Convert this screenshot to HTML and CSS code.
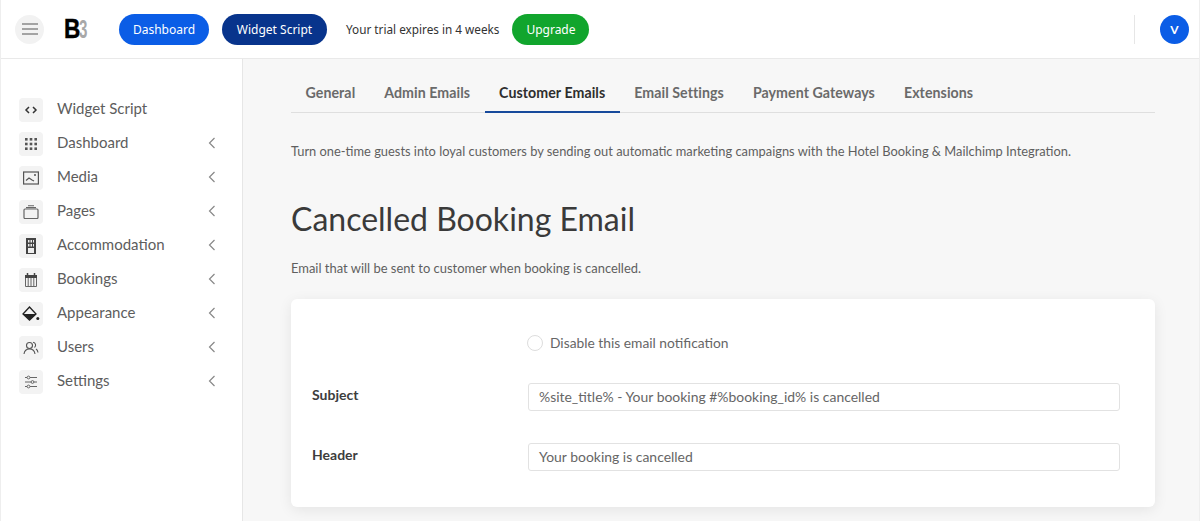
FILE: index.html
```html
<!DOCTYPE html>
<html lang="en">
<head>
<meta charset="utf-8">
<title>Cancelled Booking Email</title>
<link rel="stylesheet" href="styles.css">
</head>
<body>
<header class="topbar">
  <button class="burger" aria-label="Menu">
    <svg width="16" height="12" viewBox="0 0 16 12"><path d="M0 1h16M0 6h16M0 11h16" stroke="#555" stroke-width="1.2"/></svg>
  </button>
  <div class="logo"><span class="logo-b">B</span><span class="logo-3">3</span></div>
  <a class="pill pill-blue">Dashboard</a>
  <a class="pill pill-navy">Widget Script</a>
  <span class="trial">Your trial expires in 4 weeks</span>
  <a class="pill pill-green">Upgrade</a>
  <span class="spacer"></span>
  <span class="divider"></span>
  <span class="avatar">V</span>
</header>
<div class="body">
  <nav class="sidebar">
    <a class="item"><span class="ico"><svg width="14" height="14" viewBox="0 0 14 14"><path d="M5 4 2 7l3 3M9 4l3 3-3 3" fill="none" stroke="#333" stroke-width="1.5"/></svg></span><span class="label">Widget Script</span></a>
    <a class="item"><span class="ico"><svg width="14" height="14" viewBox="0 0 14 14" fill="#555"><rect x="1" y="1" width="2.6" height="2.6"/><rect x="5.700" y="1" width="2.6" height="2.6"/><rect x="10.400" y="1" width="2.6" height="2.6"/><rect x="1" y="5.700" width="2.6" height="2.6"/><rect x="5.700" y="5.700" width="2.6" height="2.6"/><rect x="10.400" y="5.700" width="2.6" height="2.6"/><rect x="1" y="10.400" width="2.6" height="2.6"/><rect x="5.700" y="10.400" width="2.6" height="2.6"/><rect x="10.400" y="10.400" width="2.6" height="2.6"/></svg></span><span class="label">Dashboard</span><svg class="chev" width="8" height="12" viewBox="0 0 8 12"><path d="M6.5 1 1.5 6l5 5" fill="none" stroke="#888" stroke-width="1.2"/></svg></a>
    <a class="item"><span class="ico"><svg width="16" height="14" viewBox="0 0 16 14"><rect x=".6" y="1" width="14.8" height="12" fill="none" stroke="#555" stroke-width="1.2"/><path d="M3 9.500 6 7l3 2 2 1" fill="none" stroke="#555" stroke-width="1.2"/><circle cx="12" cy="4" r="1" fill="#555"/></svg></span><span class="label">Media</span><svg class="chev" width="8" height="12" viewBox="0 0 8 12"><path d="M6.5 1 1.5 6l5 5" fill="none" stroke="#888" stroke-width="1.2"/></svg></a>
    <a class="item"><span class="ico"><svg width="16" height="14" viewBox="0 0 16 14"><rect x="1" y="4" width="14" height="9.500" rx="1" fill="none" stroke="#666" stroke-width="1.2"/><path d="M3 2.600h10M5 .8h6" stroke="#666" stroke-width="1.100"/></svg></span><span class="label">Pages</span><svg class="chev" width="8" height="12" viewBox="0 0 8 12"><path d="M6.5 1 1.5 6l5 5" fill="none" stroke="#888" stroke-width="1.2"/></svg></a>
    <a class="item"><span class="ico"><svg width="12" height="16" viewBox="0 0 12 16"><rect x="1" y="0" width="10" height="16" fill="#444"/><path d="M3 2h1.500v2.500H3zM5.500 2H7v2.500H5.500zM8 2h1v2.500H8zM3 6h1.500v2.500H3zM5.500 6H7v2.500H5.500zM8 6h1v2.500H8zM3 10h6v5H3z" fill="#eee"/></svg></span><span class="label">Accommodation</span><svg class="chev" width="8" height="12" viewBox="0 0 8 12"><path d="M6.500 1 1.500 6l5 5" fill="none" stroke="#888" stroke-width="1.2"/></svg></a>
    <a class="item"><span class="ico"><svg width="14" height="14" viewBox="0 0 14 14"><path d="M3.500 0v3M10.500 0v3" stroke="#444" stroke-width="1.500"/><rect x="1" y="2" width="12" height="3" fill="#444"/><path d="M1.500 5v8.500h11V5M4.200 5v8.500M7 5v8.500M9.800 5v8.500" fill="none" stroke="#666"/></svg></span><span class="label">Bookings</span><svg class="chev" width="8" height="12" viewBox="0 0 8 12"><path d="M6.500 1 1.500 6l5 5" fill="none" stroke="#888" stroke-width="1.2"/></svg></a>
    <a class="item"><span class="ico"><svg width="18" height="16" viewBox="0 0 18 16"><path d="M7.500 1 1 8l6.500 6L14 8z" fill="none" stroke="#222" stroke-width="1.300"/><path d="M1 8h13l-6.500 6z" fill="#222"/><circle cx="15.800" cy="12.500" r="1.500" fill="#222"/></svg></span><span class="label">Appearance</span><svg class="chev" width="8" height="12" viewBox="0 0 8 12"><path d="M6.500 1 1.500 6l5 5" fill="none" stroke="#888" stroke-width="1.2"/></svg></a>
    <a class="item"><span class="ico"><svg width="16" height="14" viewBox="0 0 16 14"><circle cx="6.500" cy="4.500" r="3" fill="none" stroke="#555" stroke-width="1.100"/><path d="M1 13c.5-3.500 2.500-5 5.500-5s5 1.500 5.500 5M10 1.200a3 3 0 0 1 1.500 5.300M13 8c1.200.8 1.800 2 2 3.500" fill="none" stroke="#555" stroke-width="1.100"/></svg></span><span class="label">Users</span><svg class="chev" width="8" height="12" viewBox="0 0 8 12"><path d="M6.500 1 1.500 6l5 5" fill="none" stroke="#888" stroke-width="1.2"/></svg></a>
    <a class="item"><span class="ico"><svg width="14" height="14" viewBox="0 0 14 14"><path d="M1 2.500h2M6 2.500h7M1 7h6M10 7h3M1 11.500h2M6 11.500h7" stroke="#666"/><circle cx="4.500" cy="2.500" r="1.400" fill="none" stroke="#666"/><circle cx="8.500" cy="7" r="1.400" fill="none" stroke="#666"/><circle cx="4.500" cy="11.500" r="1.400" fill="none" stroke="#666"/></svg></span><span class="label">Settings</span><svg class="chev" width="8" height="12" viewBox="0 0 8 12"><path d="M6.5 1 1.5 6l5 5" fill="none" stroke="#888" stroke-width="1.2"/></svg></a>
  </nav>
  <main class="main">
    <div class="tabs">
      <a class="tab">General</a>
      <a class="tab">Admin Emails</a>
      <a class="tab active">Customer Emails</a>
      <a class="tab">Email Settings</a>
      <a class="tab">Payment Gateways</a>
      <a class="tab">Extensions</a>
    </div>
    <p class="intro">Turn one-time guests into loyal customers by sending out automatic marketing campaigns with the Hotel Booking &amp; Mailchimp Integration.</p>
    <h1 class="title">Cancelled Booking Email</h1>
    <p class="sub">Email that will be sent to customer when booking is cancelled.</p>
    <section class="card">
      <div class="row row-check"><span class="field-label"></span><label class="check"><span class="radio"></span><span class="check-text">Disable this email notification</span></label></div>
      <div class="row row-subject"><span class="field-label">Subject</span><div class="input">%site_title% - Your booking #%booking_id% is cancelled</div></div>
      <div class="row"><span class="field-label">Header</span><div class="input">Your booking is cancelled</div></div>
    </section>
  </main>
</div>
</body>
</html>
```
FILE: styles.css
```css
* { box-sizing: border-box; }
html, body { margin: 0; height: 100%; overflow: hidden; }
body { font-family: Lato, "Open Sans", sans-serif; background: #fff; color: #555; width: 1200px; height: 521px; border-left: 1px solid #eee; border-right: 1px solid #eee; }
.topbar { height: 59px; display: flex; align-items: center; border-bottom: 1px solid #e9e9e9; padding: 0 10px 0 14px; background: #fff; }
.burger { width: 29px; height: 29px; border: 0; border-radius: 50%; background: #f2f2f2; display: flex; align-items: center; justify-content: center; padding: 0; }
.logo { margin-left: 20px; width: 55px; display: flex; align-items: center; font-family: "Liberation Sans", sans-serif; font-weight: 700; line-height: 1; color: #000; }
.logo-b { width: 15px; font-size: 27px; transform: scaleX(.84); transform-origin: left center; -webkit-text-stroke: .5px #000; }
.logo-3 { width: 8px; font-size: 26px; color: #a8a8a8; transform: scaleX(.58); transform-origin: left center; }
.pill { height: 31px; display: inline-flex; align-items: center; justify-content: center; border-radius: 16px; color: #fff; font-size: 12px; font-family: "Noto Sans", sans-serif; }
.pill-blue { width: 90px; background: #0b5de6; }
.pill-navy { width: 105px; margin-left: 13px; background: #08348c; }
.pill-green { width: 77px; background: #11a52d; }
.trial { margin: 0 13px 0 19px; font-size: 11.750px; color: #333; font-family: "Noto Sans", sans-serif; white-space: nowrap; }
.spacer { flex: 1; }
.divider { width: 1px; height: 29px; background: #e6e6e6; margin-right: 25px; }
.avatar { width: 29px; height: 29px; border-radius: 50%; background: #0b5de6; color: #fff; font-size: 12px; font-weight: 700; display: flex; align-items: center; justify-content: center; }
.body { display: flex; height: 462px; }
.sidebar { width: 242px; flex: none; padding-top: 34px; border-right: 1px solid #e6e6e6; background: #fff; }
.item { height: 34px; display: flex; align-items: center; padding-left: 18px; color: #5a5a5a; }
.ico { width: 24px; height: 24px; border-radius: 4px; background: #f3f3f3; display: flex; align-items: center; justify-content: center; flex: none; }
.label { margin-left: 14px; padding-bottom: 4px; font-size: 15px; color: #5d5d5d; flex: 1; }
.chev { margin: 0 26px 2px 0; }
.main { flex: 1; background: #f7f7f7; padding: 0 44px 0 48px; }
.tabs { display: flex; border-bottom: 1px solid #dfdfdf; height: 54px; padding-top: 20px; }
.tab { padding: 0 14.500px; height: 34px; line-height: 27px; font-size: 14.200px; letter-spacing: .06px; font-weight: 700; color: #6a6a6a; white-space: nowrap; }
.tab.active { color: #2e2e2e; border-bottom: 2px solid #174a9c; }
.intro { margin: 30px 0 0; font-size: 12.870px; line-height: 17px; color: #5f5f5f; white-space: nowrap; }
.title { margin: 39px 0 0; font-size: 32px; line-height: 40px; font-weight: 400; color: #3a3a3a; }
.sub { margin: 21px 0 0; font-size: 12.950px; line-height: 17px; color: #5f5f5f; }
.card { margin-top: 22px; height: 208px; background: #fff; border-radius: 6px; box-shadow: 0 3px 14px rgba(0,0,0,.08); padding: 30px 35px 0 21px; }
.row { display: flex; align-items: center; height: 28px; margin-top: 32px; }
.row-check { margin-top: 0; }
.row-subject { margin-top: 26px; }
.field-label { width: 216px; flex: none; padding-bottom: 5px; font-size: 14px; font-weight: 700; color: #3d3d3d; }
.check { display: flex; align-items: center; font-size: 13.800px; color: #666; }
.check-text { padding-bottom: 2px; }
.radio { width: 16px; height: 16px; border-radius: 50%; border: 1px solid #ddd; margin: 0 7px 0 -1px; background: #fff; }
.input { flex: 1; height: 28px; border: 1px solid #e2e2e2; border-radius: 3px; padding: 0 10px; line-height: 25px; font-size: 13.950px; color: #666; background: #fff; }
```
